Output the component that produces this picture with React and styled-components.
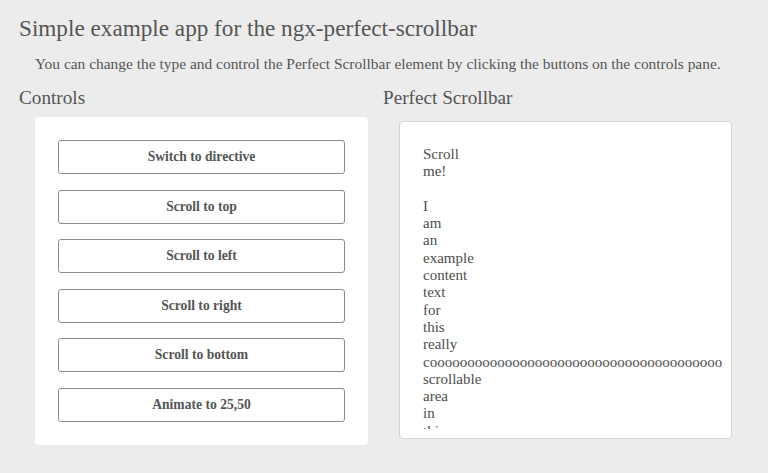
import React from 'react';
import styled, { createGlobalStyle } from 'styled-components';

const GlobalStyle = createGlobalStyle`
	html, body {
		margin: 0;
		padding: 0;
		background: #ececec;
	}
	body {
		font-family: 'Liberation Serif', 'Times New Roman', serif;
		color: #555555;
	}
`;

const Page = styled.div`
	width: 768px;
	height: 473px;
	overflow: hidden;
	padding: 14px 0 0 19px;
	box-sizing: border-box;
`;

const Title = styled.h1`
	margin: 0;
	font-size: 23.2px;
	line-height: 28px;
	font-weight: normal;
`;

const Intro = styled.p`
	margin: 12px 0 0 16px;
	font-size: 15.45px;
	line-height: 20px;
	white-space: nowrap;
`;

const Columns = styled.div`
	display: grid;
	grid-template-columns: 364px 364px;
	margin-top: 13px;
`;

const Column = styled.section`
	display: flex;
	flex-direction: column;
`;

const Heading = styled.h2`
	margin: 0;
	font-size: 19.2px;
	line-height: 22px;
	font-weight: normal;
`;

const ControlsCard = styled.div`
	display: flex;
	flex-direction: column;
	gap: 15.6px;
	width: 333px;
	box-sizing: border-box;
	margin: 8px 0 0 16px;
	padding: 23px;
	background: #ffffff;
	border-radius: 4px;
`;

const Button = styled.button`
	height: 34px;
	padding: 0;
	background: #ffffff;
	border: 1px solid #8a8a8a;
	border-radius: 3px;
	font-family: 'Liberation Serif', 'Times New Roman', serif;
	font-size: 13.6px;
	font-weight: bold;
	color: #555555;
	cursor: pointer;
`;

const ScrollPanel = styled.div`
	width: 333px;
	height: 318px;
	box-sizing: border-box;
	margin: 12px 0 0 16px;
	padding: 9px;
	background: #ffffff;
	border: 1px solid #d2d2d2;
	border-radius: 4px;
`;

const ScrollArea = styled.div`
	height: 100%;
	overflow: hidden;
	padding: 15px 0 0 14px;
	box-sizing: border-box;
`;

const Words = styled.p`
	width: 1px;
	margin: 0 0 ${p => (p.gap ? '17.3px' : '0')} 0;
	font-size: 15px;
	line-height: 17.3px;
	color: #4e4e4e;
`;

const buttons = [
	'Switch to directive',
	'Scroll to top',
	'Scroll to left',
	'Scroll to right',
	'Scroll to bottom',
	'Animate to 25,50',
];

const App = () => {
	return (
		<Page>
			<GlobalStyle />
			<Title>Simple example app for the ngx-perfect-scrollbar</Title>
			<Intro>
				You can change the type and control the Perfect Scrollbar element by clicking the buttons on the controls pane.
			</Intro>
			<Columns>
				<Column>
					<Heading>Controls</Heading>
					<ControlsCard>
						{buttons.map(label => (
							<Button key={label}>{label}</Button>
						))}
					</ControlsCard>
				</Column>
				<Column>
					<Heading>Perfect Scrollbar</Heading>
					<ScrollPanel>
						<ScrollArea>
							<Words gap>Scroll me!</Words>
							<Words>
								I am an example content text for this really cooooooooooooooooooooooooooooooooooooooooooooooooong scrollable area in this example app
							</Words>
						</ScrollArea>
					</ScrollPanel>
				</Column>
			</Columns>
		</Page>
	);
};

export default App;
